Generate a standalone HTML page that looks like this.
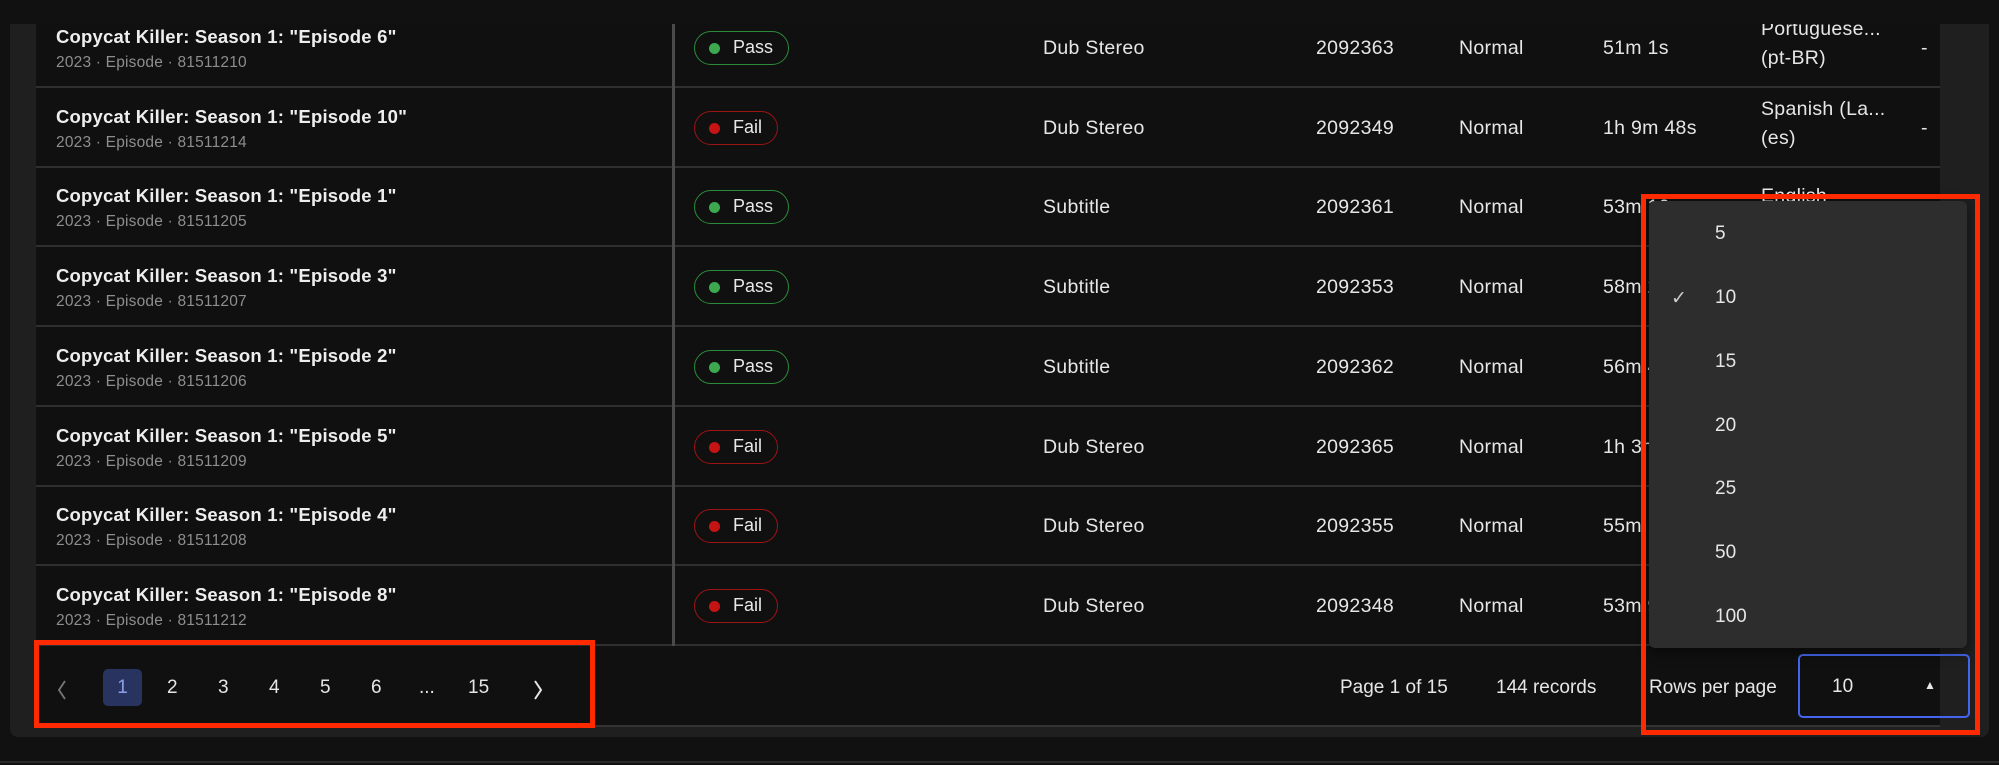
<!DOCTYPE html>
<html><head><meta charset="utf-8"><style>
*{box-sizing:border-box;margin:0;padding:0}
body{width:1999px;height:765px;background:#111;font-family:"Liberation Sans",sans-serif;color:#e8e8e8;position:relative;overflow:hidden}
.panel{position:absolute;left:10px;top:24px;width:1979px;height:713px;background:#1f1f1f;border-radius:0 0 8px 8px;overflow:hidden}
.tbl{position:absolute;left:26px;top:0;width:1904px;height:703px;background:#101010}
.row{position:absolute;left:0;width:1904px;height:80px;border-bottom:2px solid #2f2f2f}
.t{position:absolute;left:20px;top:18px;font-size:18.5px;font-weight:bold;color:#eee;letter-spacing:.2px}
.s{position:absolute;left:20px;top:46px;font-size:15.5px;color:#8e8e8e;letter-spacing:.2px}
.c{position:absolute;top:29px;font-size:19.5px;color:#e6e6e6;letter-spacing:.3px}
.badge{position:absolute;left:658px;top:23px;height:34px;border-radius:17px;border:1.5px solid;font-size:18px;padding:0 15px 0 38px;line-height:31px}
.badge:before{content:"";position:absolute;left:14px;top:11px;width:11px;height:11px;border-radius:50%}
.p{border-color:#2c8a3a}.p:before{background:#3ea84e}
.f{border-color:#9c1414}.f:before{background:#c41414}
.div{position:absolute;left:636px;top:0;width:3px;height:622px;background:#4a4a4a}
.foot{position:absolute;left:0;top:622px;width:1904px;height:81px;border-bottom:2px solid #333}
.pg{position:absolute;top:31px;font-size:19px;color:#e6e6e6}
.menu{position:absolute;left:1649px;top:201px;width:318px;height:447px;background:#2d2d2d;border-radius:6px;box-shadow:0 4px 12px rgba(0,0,0,.5)}
.mi{position:absolute;left:66px;font-size:19px;color:#e6e6e6}
.red{position:absolute;border:5px solid #ff2a00}
</style></head><body>
<div class="panel"><div class="tbl">
<div class="row" style="top:-16px"><div class="t">Copycat Killer: Season 1: "Episode 6"</div><div class="s">2023 · Episode · 81511210</div><div class="badge p">Pass</div><div class="c" style="left:1007px">Dub Stereo</div><div class="c" style="left:1280px">2092363</div><div class="c" style="left:1423px">Normal</div><div class="c" style="left:1567px">51m 1s</div><div class="c" style="left:1725px;top:7px;line-height:29px">Portuguese...<br>(pt-BR)</div><div class="c" style="left:1885px">-</div></div>
<div class="row" style="top:64px"><div class="t">Copycat Killer: Season 1: "Episode 10"</div><div class="s">2023 · Episode · 81511214</div><div class="badge f">Fail</div><div class="c" style="left:1007px">Dub Stereo</div><div class="c" style="left:1280px">2092349</div><div class="c" style="left:1423px">Normal</div><div class="c" style="left:1567px">1h 9m 48s</div><div class="c" style="left:1725px;top:7px;line-height:29px">Spanish (La...<br>(es)</div><div class="c" style="left:1885px">-</div></div>
<div class="row" style="top:143px"><div class="t">Copycat Killer: Season 1: "Episode 1"</div><div class="s">2023 · Episode · 81511205</div><div class="badge p">Pass</div><div class="c" style="left:1007px">Subtitle</div><div class="c" style="left:1280px">2092361</div><div class="c" style="left:1423px">Normal</div><div class="c" style="left:1567px">53m 10s</div><div class="c" style="left:1725px;top:18px">English</div></div>
<div class="row" style="top:223px"><div class="t">Copycat Killer: Season 1: "Episode 3"</div><div class="s">2023 · Episode · 81511207</div><div class="badge p">Pass</div><div class="c" style="left:1007px">Subtitle</div><div class="c" style="left:1280px">2092353</div><div class="c" style="left:1423px">Normal</div><div class="c" style="left:1567px">58m 2s</div></div>
<div class="row" style="top:303px"><div class="t">Copycat Killer: Season 1: "Episode 2"</div><div class="s">2023 · Episode · 81511206</div><div class="badge p">Pass</div><div class="c" style="left:1007px">Subtitle</div><div class="c" style="left:1280px">2092362</div><div class="c" style="left:1423px">Normal</div><div class="c" style="left:1567px">56m 4s</div></div>
<div class="row" style="top:383px"><div class="t">Copycat Killer: Season 1: "Episode 5"</div><div class="s">2023 · Episode · 81511209</div><div class="badge f">Fail</div><div class="c" style="left:1007px">Dub Stereo</div><div class="c" style="left:1280px">2092365</div><div class="c" style="left:1423px">Normal</div><div class="c" style="left:1567px">1h 3m</div></div>
<div class="row" style="top:462px"><div class="t">Copycat Killer: Season 1: "Episode 4"</div><div class="s">2023 · Episode · 81511208</div><div class="badge f">Fail</div><div class="c" style="left:1007px">Dub Stereo</div><div class="c" style="left:1280px">2092355</div><div class="c" style="left:1423px">Normal</div><div class="c" style="left:1567px">55m 1s</div></div>
<div class="row" style="top:542px"><div class="t">Copycat Killer: Season 1: "Episode 8"</div><div class="s">2023 · Episode · 81511212</div><div class="badge f">Fail</div><div class="c" style="left:1007px">Dub Stereo</div><div class="c" style="left:1280px">2092348</div><div class="c" style="left:1423px">Normal</div><div class="c" style="left:1567px">53m 9s</div></div>
<div class="div"></div>
<div class="foot">
<svg style="position:absolute;left:20px;top:33px" width="12" height="22" viewBox="0 0 12 22"><path d="M9 2 L3 11 L9 20" fill="none" stroke="#777" stroke-width="1.8"/></svg>
<div style="position:absolute;left:67px;top:23px;width:39px;height:37px;background:#28335f;border-radius:5px;color:#8d9fe6;font-size:19px;text-align:center;line-height:37px">1</div>
<div class="pg" style="left:131px">2</div><div class="pg" style="left:182px">3</div><div class="pg" style="left:233px">4</div><div class="pg" style="left:284px">5</div><div class="pg" style="left:335px">6</div><div class="pg" style="left:383px">...</div><div class="pg" style="left:432px">15</div>
<svg style="position:absolute;left:496px;top:33px" width="12" height="22" viewBox="0 0 12 22"><path d="M3 2 L9 11 L3 20" fill="none" stroke="#e6e6e6" stroke-width="2"/></svg>
<div class="pg" style="left:1304px">Page 1 of 15</div>
<div class="pg" style="left:1460px">144 records</div>
<div class="pg" style="left:1613px">Rows per page</div>
<div style="position:absolute;left:1762px;top:8px;width:172px;height:64px;border:2px solid #4466ee;border-radius:5px"><span style="position:absolute;left:32px;top:20px;font-size:19px">10</span><span style="position:absolute;left:124px;top:22px;font-size:12px">&#9650;</span></div>
</div>
</div></div>
<div class="menu">
<div class="mi" style="top:22px">5</div>
<div class="mi" style="top:86px;left:22px;color:#ccc">&#10003;</div><div class="mi" style="top:86px">10</div>
<div class="mi" style="top:150px">15</div>
<div class="mi" style="top:214px">20</div>
<div class="mi" style="top:277px">25</div>
<div class="mi" style="top:341px">50</div>
<div class="mi" style="top:405px">100</div>
</div>
<div class="red" style="left:34px;top:640px;width:561px;height:88px"></div>
<div class="red" style="left:1641px;top:194px;width:339px;height:541px"></div>
<div style="position:absolute;left:0;top:761px;width:1999px;height:2px;background:#2a2a2a"></div>
</body></html>
